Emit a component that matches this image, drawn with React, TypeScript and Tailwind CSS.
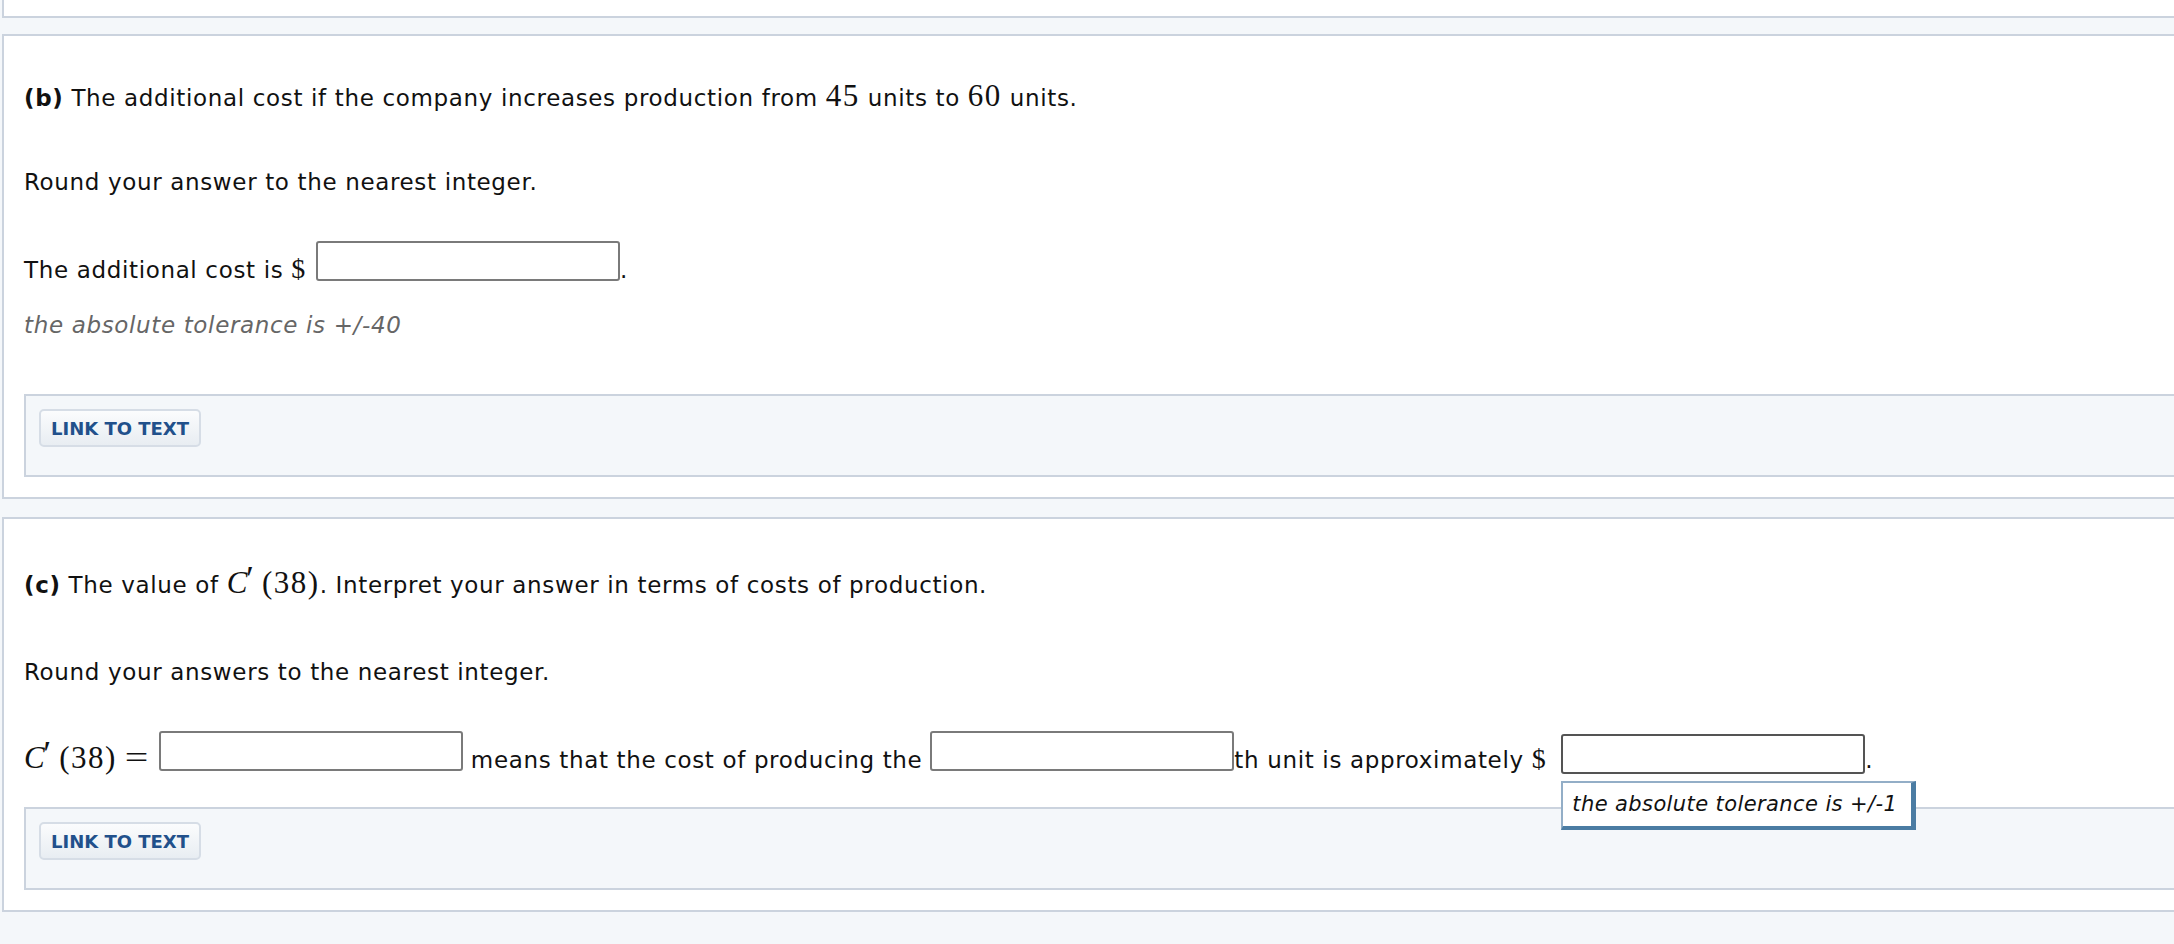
const sans = "font-['Verdana','DejaVu_Sans',sans-serif]"
const serif = "font-['Liberation_Serif','Times_New_Roman',serif]"

function M({ children }: { children: React.ReactNode }) {
  return <span className={`${serif} text-[31px] leading-none tracking-[1.5px]`}>{children}</span>
}

// C′ written the way the math renderer shows it
function CPrime() {
  return (
    <span className="inline-block w-[22px] whitespace-nowrap">
      <i>C</i>
      <span className="relative left-[-3px] top-[-2px] text-[36px] leading-none">′</span>
    </span>
  )
}

function Blank({ dark }: { dark?: boolean }) {
  return (
    <span
      className={`inline-block h-[40px] w-[304px] rounded-[3px] border-2 bg-white align-[-3px] ${
        dark ? 'border-[#545454]' : 'border-[#7a7a7a]'
      }`}
    />
  )
}

function LinkBox({ top }: { top: string }) {
  return (
    <div className={`${top} border-2 border-[#cbd3de] bg-[#f4f7fa] pb-[28px] pl-[13px] pt-[13px]`}>
      <button className="h-[38px] w-[162px] rounded-[5px] border-2 border-[#d6dde6] bg-linear-to-b from-[#fbfcfd] to-[#e8edf2] text-[18px] font-bold tracking-normal text-[#21508b]">
        LINK TO TEXT
      </button>
    </div>
  )
}

export default function App() {
  return (
    <div className={`h-[944px] w-full overflow-hidden bg-[#f4f7fa] text-[#111] ${sans}`}>
      <div className="w-[2240px] pl-[2px]">
        <div className="h-[18px] border-b-2 border-l-2 border-[#cbd3de] bg-white" />

        {/* part b */}
        <section className="mt-[16px] border-2 border-[#cbd3de] bg-white pb-[20px] pl-[20px] pt-[44px] text-[23px] tracking-[0.65px]">
          <p className="h-[32px] leading-[32px]">
            <b>(b)</b> The additional cost if the company increases production from <M>45</M> units to{' '}
            <M>60</M> units.
          </p>
          <p className="mt-[54px] h-[32px] leading-[32px]">Round your answer to the nearest integer.</p>
          <p className="mt-[43px] h-[40px] leading-[26px]">
            The additional cost is <span className={`${serif} mr-[2px] text-[28px] leading-none`}>$</span>{' '}
            <Blank />.
          </p>
          <p className="mt-[28px] h-[32px] italic leading-[32px] text-[#666]">the absolute tolerance is +/-40</p>
          <LinkBox top="mt-[53px]" />
        </section>

        {/* part c */}
        <section className="mt-[18px] border-2 border-[#cbd3de] bg-white pb-[20px] pl-[20px] pt-[44px] text-[23px] tracking-[0.65px]">
          <p className="h-[32px] leading-[32px]">
            <b>(c)</b> The value of{' '}
            <M>
              <CPrime /> <span className="ml-[4px]">(38)</span>
            </M>
            . Interpret your answer in terms of costs of production.
          </p>
          <p className="mt-[61px] h-[32px] leading-[32px]">Round your answers to the nearest integer.</p>
          <p className="mt-[43px] h-[40px] leading-[26px]">
            <M>
              <CPrime /> <span className="ml-[4px]">(38)</span>
              <span className="ml-[11px] mr-[4px] inline-block scale-x-[1.35]">=</span>
            </M>{' '}
            <Blank /> means that the cost of producing the <Blank />
            th unit is approximately <span className={`${serif} mr-[7px] text-[28px] leading-none`}>$</span>{' '}
            <span className="relative inline-block align-[-3px]">
              <Blank dark />
              <span className="absolute left-0 top-[47px] z-10 h-[49px] w-[355px] whitespace-nowrap border-b-4 border-l-2 border-r-[5px] border-t-2 border-b-[#4b7ca3] border-l-[#93aec7] border-r-[#4b7ca3] border-t-[#93aec7] bg-white pl-[9px] text-[21px] italic leading-[43px] tracking-[0.4px] text-[#111]">
                the absolute tolerance is +/-1
              </span>
            </span>
            .
          </p>
          <LinkBox top="mt-[36px]" />
        </section>
      </div>
    </div>
  )
}
